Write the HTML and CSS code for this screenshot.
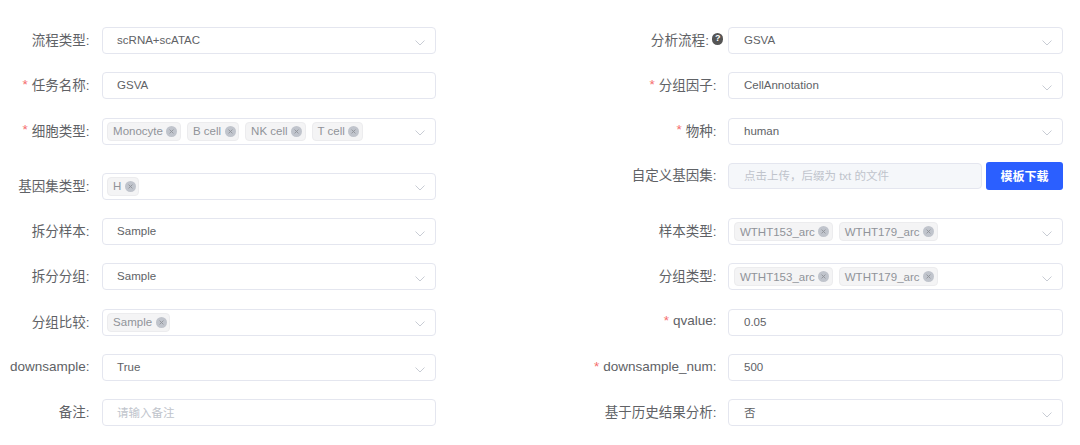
FILE: index.html
```html
<!DOCTYPE html>
<html>
<head>
  <title>GSVA</title>
  <link rel="stylesheet" href="styles.css">
</head>
<body>
  <svg class="defs" width="0" height="0">
    <symbol id="chevron" viewBox="0 0 10 6"><path d="M.5.5L5 5 9.500.5" fill="none" stroke="#c8ccd4" stroke-width="1"/></symbol>
    <symbol id="close" viewBox="0 0 11 11"><circle cx="5.5" cy="5.5" r="5.5" fill="#c0c4cc"/><path d="M3.6 3.6l3.8 3.8M7.4 3.6l-3.8 3.8" stroke="#909399" stroke-width="0.9"/></symbol>
  </svg>

  <form class="form">
    <label class="label">流程类型:</label>
    <div class="control">scRNA+scATAC<svg class="arrow"><use href="#chevron"/></svg></div>
    <label class="label label-help">分析流程:<span class="help">?</span></label>
    <div class="control">GSVA<svg class="arrow"><use href="#chevron"/></svg></div>

    <label class="label"><span class="req">*</span>任务名称:</label>
    <div class="control">GSVA</div>
    <label class="label"><span class="req">*</span>分组因子:</label>
    <div class="control">CellAnnotation<svg class="arrow"><use href="#chevron"/></svg></div>

    <label class="label"><span class="req">*</span>细胞类型:</label>
    <div class="control tags">
      <span class="tag">Monocyte<svg class="x"><use href="#close"/></svg></span>
      <span class="tag">B cell<svg class="x"><use href="#close"/></svg></span>
      <span class="tag">NK cell<svg class="x"><use href="#close"/></svg></span>
      <span class="tag">T cell<svg class="x"><use href="#close"/></svg></span>
      <svg class="arrow"><use href="#chevron"/></svg>
    </div>
    <label class="label"><span class="req">*</span>物种:</label>
    <div class="control">human<svg class="arrow"><use href="#chevron"/></svg></div>

    <label class="label low">基因集类型:</label>
    <div class="control tags low">
      <span class="tag">H<svg class="x"><use href="#close"/></svg></span>
      <svg class="arrow"><use href="#chevron"/></svg>
    </div>
    <label class="label high">自定义基因集:</label>
    <div class="upload high">
      <div class="control disabled">点击上传，后缀为 txt 的文件</div>
      <button class="btn" type="button">模板下载</button>
    </div>

    <label class="label">拆分样本:</label>
    <div class="control">Sample<svg class="arrow"><use href="#chevron"/></svg></div>
    <label class="label">样本类型:</label>
    <div class="control tags">
      <span class="tag">WTHT153_arc<svg class="x"><use href="#close"/></svg></span>
      <span class="tag">WTHT179_arc<svg class="x"><use href="#close"/></svg></span>
      <svg class="arrow"><use href="#chevron"/></svg>
    </div>

    <label class="label">拆分分组:</label>
    <div class="control">Sample<svg class="arrow"><use href="#chevron"/></svg></div>
    <label class="label">分组类型:</label>
    <div class="control tags">
      <span class="tag">WTHT153_arc<svg class="x"><use href="#close"/></svg></span>
      <span class="tag">WTHT179_arc<svg class="x"><use href="#close"/></svg></span>
      <svg class="arrow"><use href="#chevron"/></svg>
    </div>

    <label class="label">分组比较:</label>
    <div class="control tags">
      <span class="tag">Sample<svg class="x"><use href="#close"/></svg></span>
      <svg class="arrow"><use href="#chevron"/></svg>
    </div>
    <label class="label"><span class="req">*</span>qvalue:</label>
    <div class="control">0.05</div>

    <label class="label">downsample:</label>
    <div class="control">True<svg class="arrow"><use href="#chevron"/></svg></div>
    <label class="label"><span class="req">*</span>downsample_num:</label>
    <div class="control">500</div>

    <label class="label">备注:</label>
    <div class="control placeholder">请输入备注</div>
    <label class="label">基于历史结果分析:</label>
    <div class="control">否<svg class="arrow"><use href="#chevron"/></svg></div>
  </form>
</body>
</html>
```

FILE: styles.css
```css
body {
  margin: 0;
  background: #fff;
  font-family: "Liberation Sans", "Noto Sans CJK SC", sans-serif;
  color: #606266;
}
.defs {
  position: absolute;
}
.form {
  display: grid;
  grid-template-columns: 89.6px 334.4px 268.5px 334.5px;
  grid-template-rows: 27px 27px 27px 37px repeat(5, 27px);
  column-gap: 12px;
  row-gap: 18.3px;
  padding-top: 27px;
}
.low {
  align-self: end;
  height: 27px;
}
.high {
  align-self: start;
  height: 26px;
}
.label {
  display: flex;
  align-items: center;
  justify-content: flex-end;
  box-sizing: border-box;
  padding-bottom: 3px;
  font-size: 13.5px;
  white-space: nowrap;
}
.label-help {
  font-size: 13.6px;
}
.req {
  color: #f56c6c;
  margin-right: 4px;
}
.help {
  width: 11.5px;
  height: 11.5px;
  margin: 0 -7px 0 3px;
  border-radius: 50%;
  background: #555;
  color: #fff;
  font-size: 9px;
  font-weight: bold;
  line-height: 11.5px;
  text-align: center;
}
.control {
  display: flex;
  align-items: center;
  box-sizing: border-box;
  height: 27px;
  padding-left: 14.5px;
  padding-bottom: 1px;
  border: 1px solid #e4e6ef;
  border-radius: 4px;
  font-size: 11.5px;
  position: relative;
}
.tags {
  padding-left: 4.5px;
  padding-bottom: 0;
  gap: 6px;
}
.tag {
  display: flex;
  align-items: center;
  box-sizing: border-box;
  height: 19px;
  padding: 0 2.5px 0 5px;
  background: #f4f4f5;
  border: 1px solid #ececee;
  border-radius: 4px;
  color: #909399;
  font-size: 11.5px;
}
.x {
  width: 11px;
  height: 11px;
  margin-left: 3.5px;
}
.arrow {
  position: absolute;
  right: 10px;
  top: 11.500px;
  width: 10px;
  height: 6px;
}
.upload {
  display: flex;
  align-items: center;
  gap: 4px;
}
.disabled {
  flex: 1;
  height: 26px;
  background: #f5f7fa;
  color: #c0c4cc;
}
.placeholder {
  color: #c0c4cc;
}
.btn {
  flex: none;
  width: 77px;
  height: 28px;
  padding: 0;
  border: none;
  border-radius: 3px;
  background: #2b5fff;
  color: #fff;
  font-family: inherit;
  font-size: 12px;
  font-weight: bold;
}
```
